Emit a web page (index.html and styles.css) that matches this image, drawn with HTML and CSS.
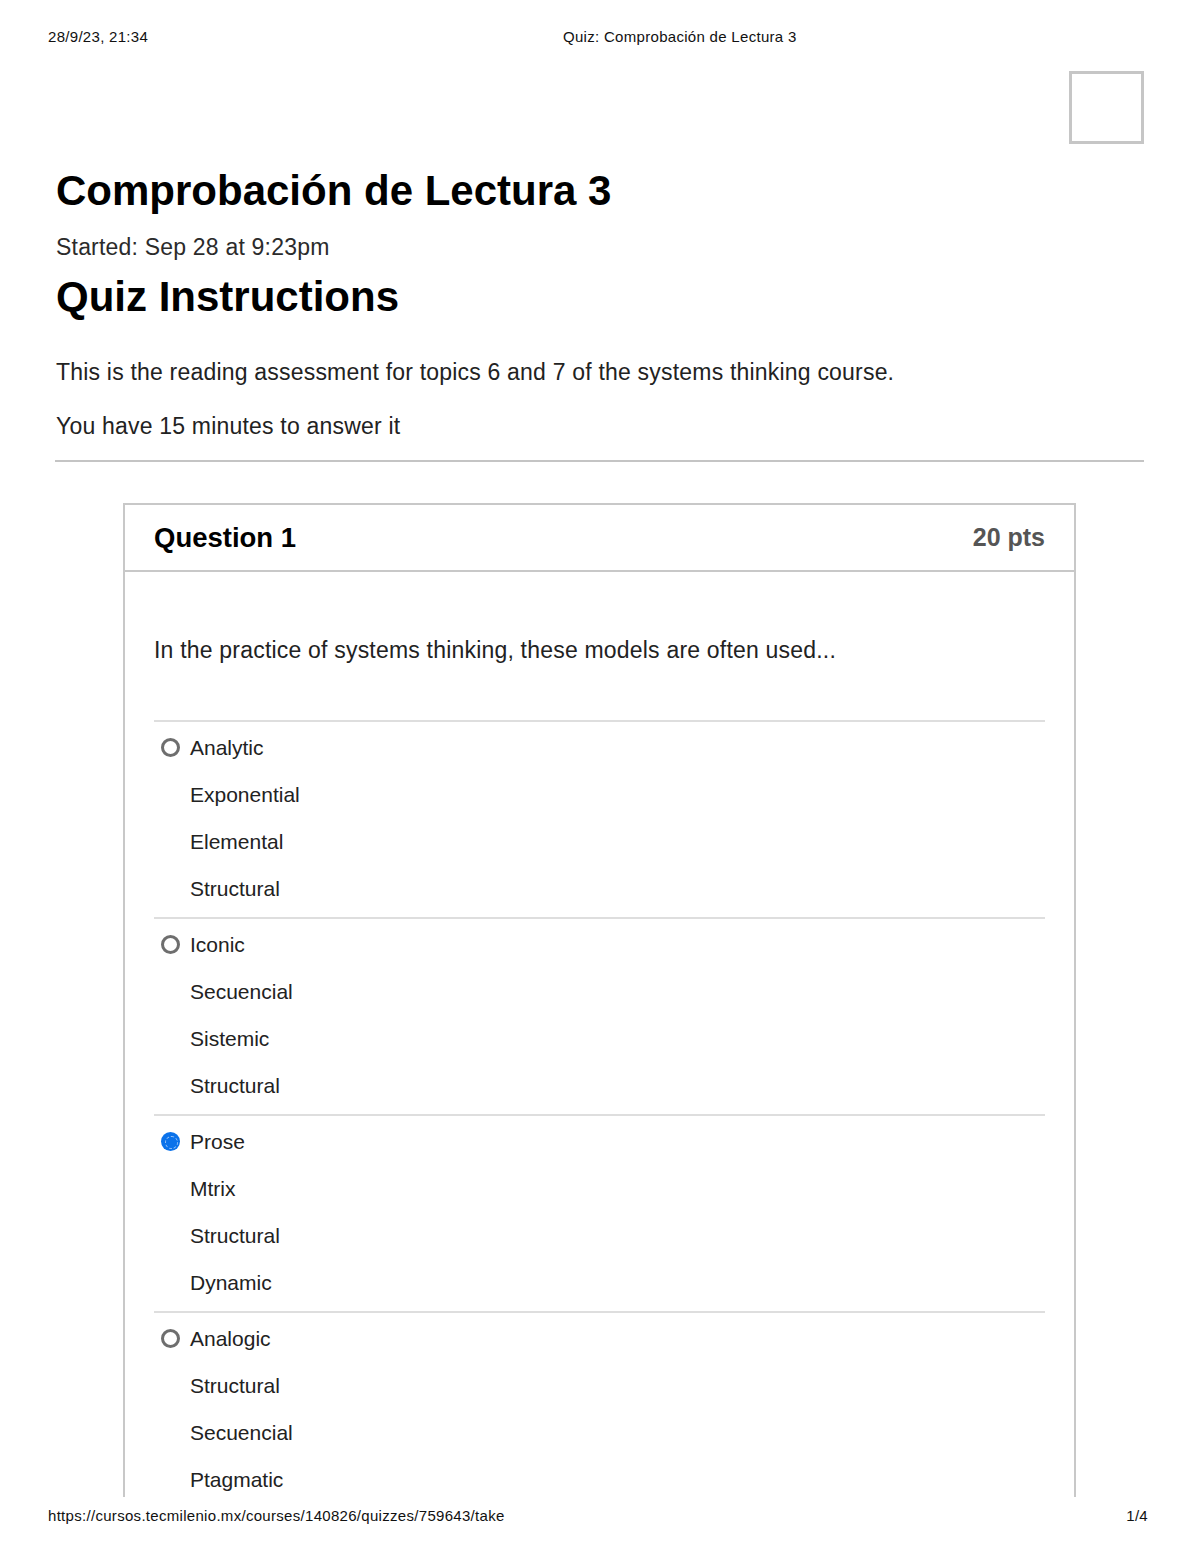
FILE: index.html
```html
<!DOCTYPE html>
<html lang="es">
<head>
<meta charset="utf-8">
<title>Quiz: Comprobación de Lectura 3</title>
<link rel="stylesheet" href="styles.css">
</head>
<body>
<div class="sheet">
  <header class="print-header">
    <span class="print-date">28/9/23, 21:34</span>
    <span class="print-title">Quiz: Comprobación de Lectura 3</span>
  </header>
  <main class="content">
    <div class="top-row"><div class="empty-box"></div></div>
    <h1 class="quiz-title">Comprobación de Lectura 3</h1>
    <p class="started">Started: Sep 28 at 9:23pm</p>
    <h2 class="instr-title">Quiz Instructions</h2>
    <p class="instr">This is the reading assessment for topics 6 and 7 of the systems thinking course.</p>
    <p class="instr instr-2">You have 15 minutes to answer it</p>
    <hr class="rule">
    <section class="question">
      <div class="q-header">
        <span class="q-name">Question 1</span>
        <span class="q-pts">20 pts</span>
      </div>
      <div class="q-body">
        <p class="q-text">In the practice of systems thinking, these models are often used...</p>
        <div class="answer">
          <div class="opt"><span class="radio"></span>Analytic</div>
          <div class="opt">Exponential</div>
          <div class="opt">Elemental</div>
          <div class="opt">Structural</div>
        </div>
        <div class="answer">
          <div class="opt"><span class="radio"></span>Iconic</div>
          <div class="opt">Secuencial</div>
          <div class="opt">Sistemic</div>
          <div class="opt">Structural</div>
        </div>
        <div class="answer">
          <div class="opt"><span class="radio checked"></span>Prose</div>
          <div class="opt">Mtrix</div>
          <div class="opt">Structural</div>
          <div class="opt">Dynamic</div>
        </div>
        <div class="answer">
          <div class="opt"><span class="radio"></span>Analogic</div>
          <div class="opt">Structural</div>
          <div class="opt">Secuencial</div>
          <div class="opt">Ptagmatic</div>
        </div>
      </div>
    </section>
  </main>
  <footer class="print-footer">
    <span class="print-url">https://cursos.tecmilenio.mx/courses/140826/quizzes/759643/take</span>
    <span class="print-page">1/4</span>
  </footer>
</div>
</body>
</html>
```

FILE: styles.css
```css
* { box-sizing: border-box; }
html, body { margin: 0; padding: 0; background: #fff; }
body { font-family: "Liberation Sans", Arial, sans-serif; color: #000; }

.sheet { width: 1200px; height: 1553px; position: relative; overflow: hidden; }

.print-header {
  height: 60px;
  padding-top: 27px;
  display: flex;
  font-size: 15px;
  line-height: 20px;
  letter-spacing: 0.3px;
  color: #111;
}
.print-date { margin-left: 48px; width: 515px; }

.content {
  height: 1437px;
  overflow: hidden;
  padding: 0 56px;
}

.top-row { display: flex; justify-content: flex-end; margin-top: 11px; }
.empty-box {
  width: 75px; height: 73px;
  border: 3px solid #c6c6c6;
}

.quiz-title {
  margin: 23px 0 0;
  font-size: 42px;
  line-height: 48px;
  font-weight: bold;
}
.started {
  margin: 17px 0 0;
  font-size: 23px;
  line-height: 30px;
  letter-spacing: 0.2px;
  color: #2b2b2b;
}
.instr-title {
  margin: 11px 0 0;
  font-size: 42px;
  line-height: 48px;
  font-weight: bold;
}
.instr {
  margin: 36px 0 0;
  font-size: 23px;
  line-height: 30px;
  letter-spacing: 0.2px;
  color: #222;
}
.instr-2 { margin-top: 24px; }

.rule {
  margin: 19px 0 0 -1px;
  border: 0;
  border-top: 2px solid #c4c4c4;
  height: 0;
}

.question {
  margin: 41px 68px 0 67px;
  border: 2px solid #c8c8c8;
  border-bottom: 0;
  min-height: 1200px;
}
.q-header {
  height: 67px;
  border-bottom: 2px solid #c8c8c8;
  display: flex;
  align-items: center;
  justify-content: space-between;
  padding: 0 29px;
}
.q-name { font-size: 27.5px; font-weight: bold; }
.q-pts { font-size: 25px; font-weight: bold; color: #555; }

.q-body { padding: 0 29px; }
.q-text {
  margin: 0;
  padding: 63px 0 55px;
  font-size: 23px;
  line-height: 30px;
  letter-spacing: 0.2px;
  color: #222;
}

.answer {
  border-top: 2px solid #dedede;
  padding: 11px 0 13px;
  display: flex;
  flex-direction: column;
  gap: 17px;
}
.opt {
  height: 30px;
  line-height: 30px;
  font-size: 21px;
  color: #222;
  padding-left: 36px;
  position: relative;
}
.radio {
  position: absolute;
  left: 7px; top: 5px;
  width: 19px; height: 19px;
  border: 3px solid #6e6e6e;
  border-radius: 50%;
  background: #fff;
}
.radio.checked {
  border: 0;
  background: #0b72ea;
}
.radio.checked::after {
  content: "";
  position: absolute;
  left: 4px; top: 4px;
  width: 11px; height: 11px;
  border-radius: 50%;
  border: 1px dashed rgba(255,255,255,0.6);
}

.print-footer {
  position: absolute;
  left: 0; right: 0; top: 1506px;
  display: flex;
  justify-content: space-between;
  font-size: 15px;
  line-height: 20px;
  letter-spacing: 0.3px;
  color: #111;
  padding: 0 52px 0 48px;
}
```
